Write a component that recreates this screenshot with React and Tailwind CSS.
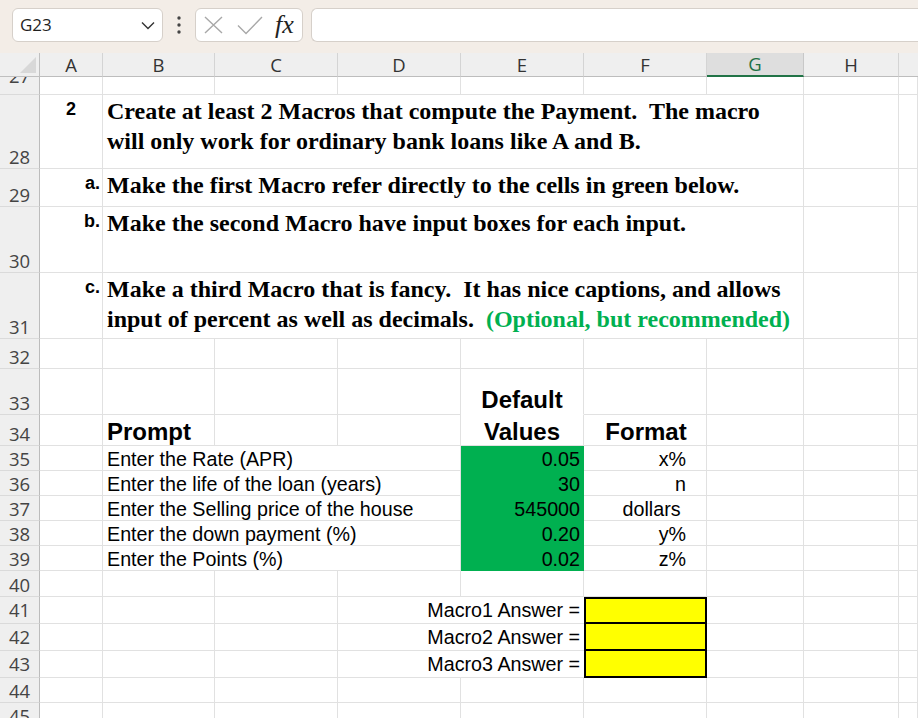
import React from 'react'

const G = "border-r border-b border-[#e1e1e1]"
const ARIAL = "font-['Liberation_Sans',Arial,sans-serif]"
const TIMES = "font-['Liberation_Serif','Times_New_Roman',serif]"
const UI = "font-['Open_Sans','Noto_Sans',sans-serif]"

const prompts = [
  ['Enter the Rate (APR)', '0.05', 'x%'],
  ['Enter the life of the loan (years)', '30', 'n'],
  ['Enter the Selling price of the house', '545000', 'dollars '],
  ['Enter the down payment (%)', '0.20', 'y%'],
  ['Enter the Points (%)', '0.02', 'z%'],
]

const RowHead = ({ n, cls = 'pb-[2px]' }) => (
  <div className={`flex items-end justify-center overflow-hidden bg-[#efefef] border-r border-b border-r-[#bcbcbc] border-b-[#dadada] text-[18.5px] leading-none text-[#444] ${UI} ${cls}`}>
    {n}
  </div>
)

const empties = (n, key) =>
  Array.from({ length: n }, (_, i) => <div key={key + i} className={G} />)

const TopBar = () => (
  <div className="h-[53px] bg-[#f3ede7] flex items-start pt-[8px] pl-[12px]">
    <div className="w-[151px] h-[34px] bg-white border border-[#d6d0ca] rounded-[6px] flex items-center justify-between pl-[7px] pr-[7px]">
      <span className={`text-[17px] text-[#1f1f1f] ${UI}`}>G23</span>
      <svg width="14" height="9" viewBox="0 0 14 9" fill="none" stroke="#333" strokeWidth="1.4">
        <path d="M1 1.5 L7 7.5 L13 1.5" />
      </svg>
    </div>
    <div className="w-[32px] h-[34px] flex items-center justify-center">
      <svg width="4" height="18" viewBox="0 0 4 18" fill="#444">
        <circle cx="2" cy="2" r="1.7" />
        <circle cx="2" cy="9" r="1.7" />
        <circle cx="2" cy="16" r="1.7" />
      </svg>
    </div>
    <div className="w-[108px] h-[34px] bg-white border border-[#d6d0ca] rounded-[6px] flex items-center pl-[8px]">
      <svg width="19" height="18" viewBox="0 0 19 18" fill="none" stroke="#a8a8a8" strokeWidth="1.4">
        <path d="M1 1 L18 17 M18 1 L1 17" />
      </svg>
      <svg className="ml-[14px]" width="26" height="19" viewBox="0 0 26 19" fill="none" stroke="#a8a8a8" strokeWidth="1.4">
        <path d="M1 9.5 L9 17.5 L25 1" />
      </svg>
      <span className={`ml-[12px] italic text-[26px] leading-none text-[#222] ${TIMES}`}>fx</span>
    </div>
    <div className="ml-[8px] flex-1 h-[34px] bg-white border border-r-0 border-[#d6d0ca] rounded-l-[6px]" />
  </div>
)

const letters = ['A', 'B', 'C', 'D', 'E', 'F', 'G', 'H']

export default function App() {
  return (
    <div className="w-[918px] h-[718px] overflow-hidden bg-white">
      <TopBar />
      <div className="grid grid-cols-[40px_63px_112px_123px_123px_123px_123px_97px_95px_1fr] grid-rows-[24px_18px_74px_38px_66px_66px_30px_46px_31px_25px_25px_25px_25px_25px_26px_27px_27px_27px_25px_25px]">
        {/* column headers */}
        <div className="flex items-end justify-end pr-[3px] pb-[3px] bg-[#efefef] border-r border-b border-[#bfbfbf]">
          <svg width="16" height="16" viewBox="0 0 16 16">
            <path d="M16 0 L16 16 L0 16 Z" fill="#d8d8d8" />
          </svg>
        </div>
        {letters.map((l) =>
          l === 'G' ? (
            <div key={l} className={`flex items-center justify-center bg-[#dedede] border-r border-r-[#c8c8c8] border-b-2 border-b-[#217346] text-[18.5px] text-[#1e7145] ${UI}`}>
              {l}
            </div>
          ) : (
            <div key={l} className={`flex items-center justify-center bg-[#efefef] border-r border-b border-r-[#d4d4d4] border-b-[#bdbdbd] text-[18.5px] text-[#333] ${UI}`}>
              {l}
            </div>
          )
        )}
        <div className="bg-[#efefef] border-b border-[#bdbdbd]" />

        {/* 27 */}
        <RowHead n="27" cls="pb-[9px]" />
        {empties(9, 'r27')}

        {/* 28 */}
        <RowHead n="28" />
        <div className={`${G} flex justify-center pt-[5px] font-bold text-[18px] leading-none ${ARIAL}`}>2</div>
        <div className={`${G} col-span-6 pt-[1px] pl-[4px] font-bold text-[24px] leading-[30px] whitespace-pre ${TIMES}`}>
          <div>Create at least 2 Macros that compute the Payment.  The macro</div>
          <div>will only work for ordinary bank loans like A and B.</div>
        </div>
        {empties(2, 'r28')}

        {/* 29 */}
        <RowHead n="29" />
        <div className={`${G} flex justify-end pr-[2px] pt-[5px] font-bold text-[18px] leading-none ${ARIAL}`}>a.</div>
        <div className={`${G} col-span-6 pt-[1px] pl-[4px] font-bold text-[24px] leading-[30px] whitespace-pre ${TIMES}`}>
          Make the first Macro refer directly to the cells in green below.
        </div>
        {empties(2, 'r29')}

        {/* 30 */}
        <RowHead n="30" />
        <div className={`${G} flex justify-end pr-[2px] pt-[5px] font-bold text-[18px] leading-none ${ARIAL}`}>b.</div>
        <div className={`${G} col-span-6 pt-[1px] pl-[4px] font-bold text-[24px] leading-[30px] whitespace-pre ${TIMES}`}>
          Make the second Macro have input boxes for each input.
        </div>
        {empties(2, 'r30')}

        {/* 31 */}
        <RowHead n="31" />
        <div className={`${G} flex justify-end pr-[2px] pt-[5px] font-bold text-[18px] leading-none ${ARIAL}`}>c.</div>
        <div className={`${G} col-span-6 pt-[1px] pl-[4px] font-bold text-[24px] leading-[30px] whitespace-pre ${TIMES}`}>
          <div>Make a third Macro that is fancy.  It has nice captions, and allows</div>
          <div>
            input of percent as well as decimals.  <span className="text-[#00b050]">(Optional, but recommended)</span>
          </div>
        </div>
        {empties(2, 'r31')}

        {/* 32 */}
        <RowHead n="32" />
        {empties(9, 'r32')}

        {/* 33 */}
        <RowHead n="33" />
        {empties(4, 'r33a')}
        <div className={`border-r border-b border-r-[#e1e1e1] border-b-white flex items-end justify-center pb-[2px] font-bold text-[24px] leading-none ${ARIAL}`}>
          Default
        </div>
        {empties(4, 'r33b')}

        {/* 34 */}
        <RowHead n="34" />
        <div className={G} />
        <div className={`${G} flex items-end pl-[4px] pb-[1px] font-bold text-[24px] leading-none ${ARIAL}`}>Prompt</div>
        {empties(2, 'r34a')}
        <div className={`${G} flex items-end justify-center pb-[1px] font-bold text-[24px] leading-none ${ARIAL}`}>Values</div>
        <div className={`${G} flex items-end justify-center pl-[2px] pb-[1px] font-bold text-[24px] leading-none ${ARIAL}`}>Format</div>
        {empties(3, 'r34b')}

        {/* 35-39 */}
        {prompts.map(([label, val, fmt], i) => (
          <React.Fragment key={label}>
            <RowHead n={35 + i} />
            <div className={G} />
            <div className={`${G} col-span-3 flex items-end pl-[4px] text-[19.7px] leading-none whitespace-nowrap ${ARIAL}`}>{label}</div>
            <div className={`bg-[#00b050] flex items-end justify-end pr-[4px] pb-[1px] text-[19.7px] leading-none ${ARIAL}`}>{val}</div>
            <div className={`${G} flex items-end justify-end pr-[20px] text-[19.7px] leading-none whitespace-pre ${ARIAL}`}>{fmt}</div>
            {empties(3, 'p' + i)}
          </React.Fragment>
        ))}

        {/* 40 */}
        <RowHead n="40" />
        {empties(9, 'r40')}

        {/* 41-43 */}
        {[1, 2, 3].map((m) => (
          <React.Fragment key={m}>
            <RowHead n={40 + m} cls="pb-[4px]" />
            {empties(3, 'm' + m)}
            <div className={`border-b border-[#e1e1e1] col-span-2 flex items-end justify-end pr-[4px] pb-[2px] text-[19.7px] leading-none whitespace-nowrap ${ARIAL}`}>
              Macro{m} Answer =
            </div>
            <div className={m === 1 ? 'bg-[#ffff00] border-2 border-black' : 'bg-[#ffff00] border-2 border-t-0 border-black'} />
            {empties(3, 'n' + m)}
          </React.Fragment>
        ))}

        {/* 44-45 */}
        <RowHead n="44" />
        {empties(9, 'r44')}
        <RowHead n="45" />
        {empties(9, 'r45')}
      </div>
    </div>
  )
}
